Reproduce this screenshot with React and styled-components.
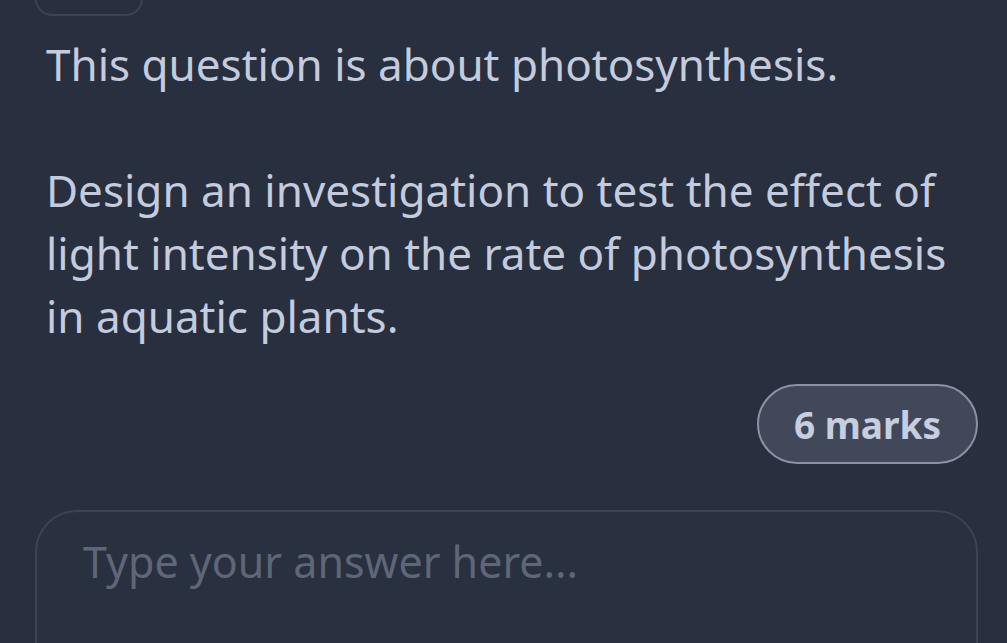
import React from 'react';
import styled, { createGlobalStyle } from 'styled-components';

const GlobalStyle = createGlobalStyle`
  html, body {
    margin: 0;
    padding: 0;
    background: #282f3f;
    overflow: hidden;
  }
  * {
    box-sizing: border-box;
  }
`;

const question = {
  intro: 'This question is about photosynthesis.',
  body: 'Design an investigation to test the effect of light intensity on the rate of photosynthesis in aquatic plants.',
  marks: 6,
};

const App = () => {
  return (
    <>
      <GlobalStyle />
      <Page>
        <TopTag />
        <QuestionText>
          {question.intro}
          {'\n\n'}
          {question.body}
        </QuestionText>
        <MarksRow>
          <MarksPill>{question.marks} marks</MarksPill>
        </MarksRow>
        <AnswerBox placeholder="Type your answer here..." />
      </Page>
    </>
  );
};

export default App;

const Page = styled.div`
  display: flex;
  flex-direction: column;
  padding: 0 29px 0 35px;
  font-family: 'Noto Sans', Lato, sans-serif;
  background: #282f3f;

  & > * {
    flex-shrink: 0;
  }
`;

const TopTag = styled.div`
  width: 108px;
  height: 17px;
  margin-top: -1px;
  border: 2px solid #3b4354;
  border-top: none;
  border-radius: 0 0 22px 22px;
`;

const QuestionText = styled.div`
  margin: 17px 0 0 11px;
  white-space: pre-wrap;
  font-size: 44px;
  line-height: 63px;
  color: #c3cbdd;
`;

const MarksRow = styled.div`
  display: flex;
  justify-content: flex-end;
  margin-top: 36px;
`;

const MarksPill = styled.div`
  height: 80px;
  padding: 0 35px;
  display: flex;
  align-items: center;
  border: 2px solid #8a92a4;
  border-radius: 40px;
  background: #414859;
  color: #c6cee0;
  font-size: 37px;
  font-weight: 700;
`;

const AnswerBox = styled.textarea`
  margin-top: 46px;
  height: 200px;
  padding: 20px 46px;
  border: 2px solid #3b4354;
  border-radius: 42px;
  background: #29303f;
  resize: none;
  outline: none;
  font-family: inherit;
  font-size: 43px;
  color: #c3cbdd;

  &::placeholder {
    color: #5f6677;
  }
`;
